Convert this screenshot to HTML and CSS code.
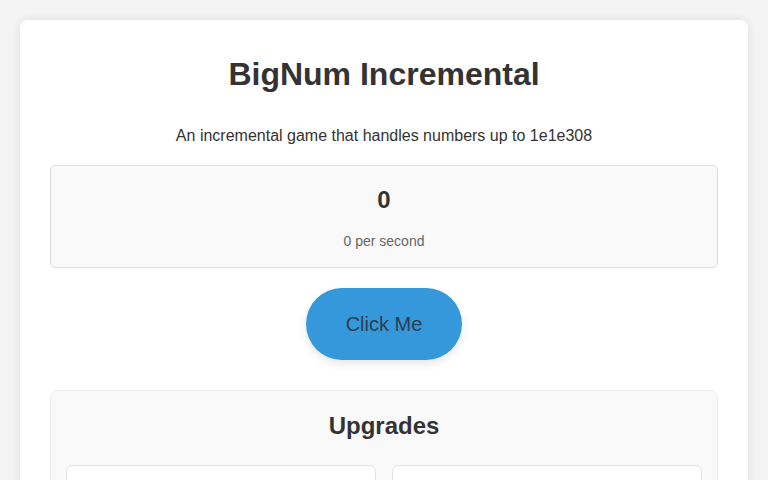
FILE: index.html
```html
<!DOCTYPE html>
<html lang="en">
<head>
<meta charset="utf-8">
<title>BigNum Incremental</title>
<link rel="stylesheet" href="styles.css">
</head>
<body>
<div class="container">
  <h1 class="title">BigNum Incremental</h1>
  <p class="subtitle">An incremental game that handles numbers up to 1e1e308</p>
  <div class="counter">
    <div class="count">0</div>
    <div class="rate">0 per second</div>
  </div>
  <div class="click-row">
    <button class="click-btn">Click Me</button>
  </div>
  <section class="upgrades">
    <h2 class="upgrades-title">Upgrades</h2>
    <div class="upgrade-grid">
      <div class="upgrade-card">
        <h3 class="upgrade-name">Auto Clicker</h3>
        <p class="upgrade-desc">Generates 1 per second</p>
      </div>
      <div class="upgrade-card">
        <h3 class="upgrade-name">Multiplier</h3>
        <p class="upgrade-desc">Doubles click value</p>
      </div>
    </div>
  </section>
</div>
</body>
</html>
```
FILE: styles.css
```css
html, body {
  margin: 0;
  padding: 0;
}
body {
  background: #f4f4f4;
  font-family: "Liberation Sans", Arial, sans-serif;
  color: #333;
  padding: 20px;
}
.container {
  background: #fff;
  border-radius: 8px;
  box-shadow: 0 0 10px rgba(0, 0, 0, 0.1);
  padding: 36px 30px 30px;
}
.title {
  font-size: 32px;
  font-weight: bold;
  text-align: center;
  margin: 0 0 34px;
  color: #333;
}
.subtitle {
  font-size: 16px;
  text-align: center;
  margin: 0 0 20px;
}
.counter {
  background: #f9f9f9;
  border: 1px solid #ddd;
  border-radius: 5px;
  padding: 20px 20px 18px;
  text-align: center;
}
.count {
  font-size: 24px;
  font-weight: bold;
  margin-bottom: 19px;
}
.rate {
  font-size: 14px;
  color: #666;
}
.click-row {
  display: flex;
  justify-content: center;
  margin: 20px 0 30px;
}
.click-btn {
  font-family: "Liberation Sans", Arial, sans-serif;
  font-size: 20px;
  line-height: 24px;
  height: 72px;
  padding: 0 40px;
  background: #3498db;
  color: #2c3e50;
  border: none;
  border-radius: 50px;
  box-shadow: 0 4px 8px rgba(0, 0, 0, 0.1);
  cursor: pointer;
}
.upgrades {
  background: #f9f9f9;
  border: 1px solid #eee;
  border-radius: 8px;
  padding: 21px 15px 15px;
}
.upgrades-title {
  font-size: 24px;
  text-align: center;
  margin: 0 0 25px;
}
.upgrade-grid {
  display: grid;
  grid-template-columns: 1fr 1fr;
  gap: 16px;
}
.upgrade-card {
  background: #fff;
  border: 1px solid #e4e4e4;
  border-radius: 6px;
  padding: 20px 15px 15px;
}
.upgrade-name {
  font-size: 18px;
  margin: 0 0 8px;
}
.upgrade-desc {
  font-size: 14px;
  color: #666;
  margin: 0;
}
```
